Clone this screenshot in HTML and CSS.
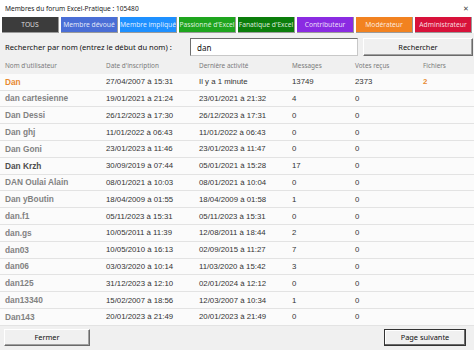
FILE: index.html
```html
<!DOCTYPE html>
<html lang="fr">
<head>
   <meta charset="UTF-8">
   <title>Membres du forum Excel-Pratique</title>
   <link rel="stylesheet" href="styles.css">
</head>
<body>
   <div class="window">
      <div class="titlebar">
         <span class="title">Membres du forum Excel-Pratique : 105480</span>
         <span class="close">&#x2715;</span>
      </div>
      <div class="tabs">
         <button class="tab tab-all">TOUS</button>
         <button class="tab tab-devoue">Membre dévoué</button>
         <button class="tab tab-implique">Membre impliqué</button>
         <button class="tab tab-passionne">Passionné d'Excel</button>
         <button class="tab tab-fanatique">Fanatique d'Excel</button>
         <button class="tab tab-contrib">Contributeur</button>
         <button class="tab tab-modo">Modérateur</button>
         <button class="tab tab-admin">Administrateur</button>
      </div>
      <div class="content">
         <div class="search-row">
            <label class="search-label">Rechercher par nom (entrez le début du nom) :</label>
            <input type="text" class="search-input" value="dan">
            <button class="win-btn search-btn">Rechercher</button>
         </div>
         <div class="members">
            <div class="row head">
               <span>Nom d'utilisateur</span>
               <span>Date d'inscription</span>
               <span>Dernière activité</span>
               <span>Messages</span>
               <span>Votes reçus</span>
               <span>Fichiers</span>
            </div>
            <div id="memberRows"></div>
         </div>
         <div class="footer">
            <button class="win-btn close-btn">Fermer</button>
            <button class="win-btn next-btn">Page suivante</button>
         </div>
      </div>
   </div>
   <script>
      const members = [
         ['Dan', '27/04/2007 à 15:31', 'Il y a 1 minute', '13749', '2373', '2', 'orange'],
         ['dan cartesienne', '19/01/2021 à 21:24', '23/01/2021 à 21:32', '4', '0', '', ''],
         ['Dan Dessi', '26/12/2023 à 17:30', '26/12/2023 à 17:31', '0', '0', '', ''],
         ['Dan ghj', '11/01/2022 à 06:43', '11/01/2022 à 06:43', '0', '0', '', ''],
         ['Dan Goni', '23/01/2023 à 11:46', '23/01/2023 à 11:47', '0', '0', '', ''],
         ['Dan Krzh', '30/09/2019 à 07:44', '05/01/2021 à 15:28', '17', '0', '', 'dark'],
         ['DAN Oulai Alain', '08/01/2021 à 10:03', '08/01/2021 à 10:04', '0', '0', '', ''],
         ['Dan yBoutin', '18/04/2009 à 01:55', '18/04/2009 à 01:58', '1', '0', '', ''],
         ['dan.f1', '05/11/2023 à 15:31', '05/11/2023 à 15:31', '0', '0', '', ''],
         ['dan.gs', '10/05/2011 à 11:39', '12/08/2011 à 18:44', '2', '0', '', ''],
         ['dan03', '10/05/2010 à 16:13', '02/09/2015 à 11:27', '7', '0', '', ''],
         ['dan06', '03/03/2020 à 10:14', '11/03/2020 à 15:42', '3', '0', '', ''],
         ['dan125', '31/12/2023 à 12:10', '02/01/2024 à 12:12', '0', '0', '', ''],
         ['dan13340', '15/02/2007 à 18:56', '12/03/2007 à 10:34', '1', '0', '', ''],
         ['Dan143', '20/01/2023 à 21:49', '20/01/2023 à 21:49', '0', '0', '', '']
      ];
      const list = document.getElementById('memberRows');
      members.forEach(m => {
         const row = document.createElement('div');
         row.className = 'row';
         m.slice(0, 6).forEach((val, i) => {
            const cell = document.createElement('span');
            cell.textContent = val;
            if(i === 0) { cell.className = 'name ' + m[6]; }
            else if(i === 5) { cell.className = 'files'; }
            else { cell.className = 'cell'; }
            row.appendChild(cell);
         });
         list.appendChild(row);
      });
   </script>
</body>
</html>
```

FILE: styles.css
```css
* { box-sizing: border-box; }
body {
   margin: 0;
   padding: 0;
   background: #fff;
   font-family: 'Noto Sans', 'Open Sans', sans-serif;
}
.window {
   width: 474px;
   height: 350px;
   background: #fff;
   display: flex;
   flex-direction: column;
}
.titlebar {
   height: 17px;
   display: flex;
   justify-content: space-between;
   align-items: center;
   padding: 0 5px 0 5px;
}
.title {
   font-size: 6.6px;
   color: #222;
}
.close {
   font-size: 7px;
   color: #444;
}
.tabs {
   display: flex;
   gap: 2px;
   padding: 0 2px;
   height: 16px;
}
.tab {
   flex: 1;
   margin: 0;
   padding: 0;
   border: none;
   border-right: 1px solid #9a9a9a;
   border-bottom: 1px solid #9a9a9a;
   font-family: 'Noto Sans', 'Open Sans', sans-serif;
   font-size: 6.7px;
   color: rgba(255,255,255,0.85);
   white-space: nowrap;
   overflow: hidden;
}
.tab-all { background: #3c3c3c; color: #ddd; }
.tab-devoue { background: #4a6ed6; }
.tab-implique { background: #1e90ff; }
.tab-passionne { background: #1ea51e; }
.tab-fanatique { background: #0b7d0b; }
.tab-contrib { background: #8a2be2; }
.tab-modo { background: #f28220; }
.tab-admin { background: #d8123a; }
.content {
   flex: 1;
   background: #f0f0f0;
   display: flex;
   flex-direction: column;
   padding: 5px 0 0 0;
}
.search-row {
   display: flex;
   align-items: center;
   height: 18px;
   padding: 0 1px 0 5px;
}
.search-label {
   width: 185px;
   font-size: 7.6px;
   color: #111;
}
.search-input {
   width: 168px;
   height: 18px;
   padding: 0 6px;
   border: 1px solid #c8c8c8;
   border-top-color: #6e6e6e;
   border-left-color: #6e6e6e;
   background: #fff;
   font-family: 'Noto Sans', 'Open Sans', sans-serif;
   font-size: 8px;
   color: #111;
   outline: none;
}
.win-btn {
   margin: 0;
   padding: 0;
   background: #f0f0f0;
   border: 1px solid;
   border-color: #fff #6a6a6a #6a6a6a #fff;
   box-shadow: inset -1px -1px 0 #a0a0a0;
   font-family: 'Noto Sans', 'Open Sans', sans-serif;
   font-size: 7.4px;
   color: #111;
}
.search-btn {
   margin-left: 5px;
   flex: 1;
   height: 18px;
}
.members {
   margin-top: 1px;
}
.row {
   display: grid;
   grid-template-columns: 101px 93px 93px 63px 68px 1fr;
   height: 16.8px;
   align-items: center;
   padding-left: 5px;
   background: #fbfbfb;
   border-bottom: 1px solid #e3e3e3;
   font-family: 'Liberation Sans', Arial, sans-serif;
   font-size: 7.8px;
   color: #333;
   white-space: nowrap;
}
.cell {
   font-weight: normal;
   color: #333;
}
.row.head {
   background: #f0f0f0;
   border-bottom: none;
   font-family: 'Noto Sans', 'Open Sans', sans-serif;
   font-size: 6.4px;
}
.row.head span { color: #7a7a7a; }
.name {
   font-weight: bold;
   font-size: 8.3px;
   color: #828282;
}
.name.orange { color: #e8892f; }
.name.dark { color: #4e4e4e; }
.files {
   font-weight: bold;
   color: #e8892f;
}
.footer {
   display: flex;
   justify-content: space-between;
   padding: 3px 8px 0 4px;
}
.close-btn {
   width: 86px;
   height: 17px;
}
.next-btn {
   width: 82px;
   height: 17px;
   border: 1px solid #333;
   box-shadow: inset -1px -1px 0 #6a6a6a, inset 1px 1px 0 #fff;
}
```
